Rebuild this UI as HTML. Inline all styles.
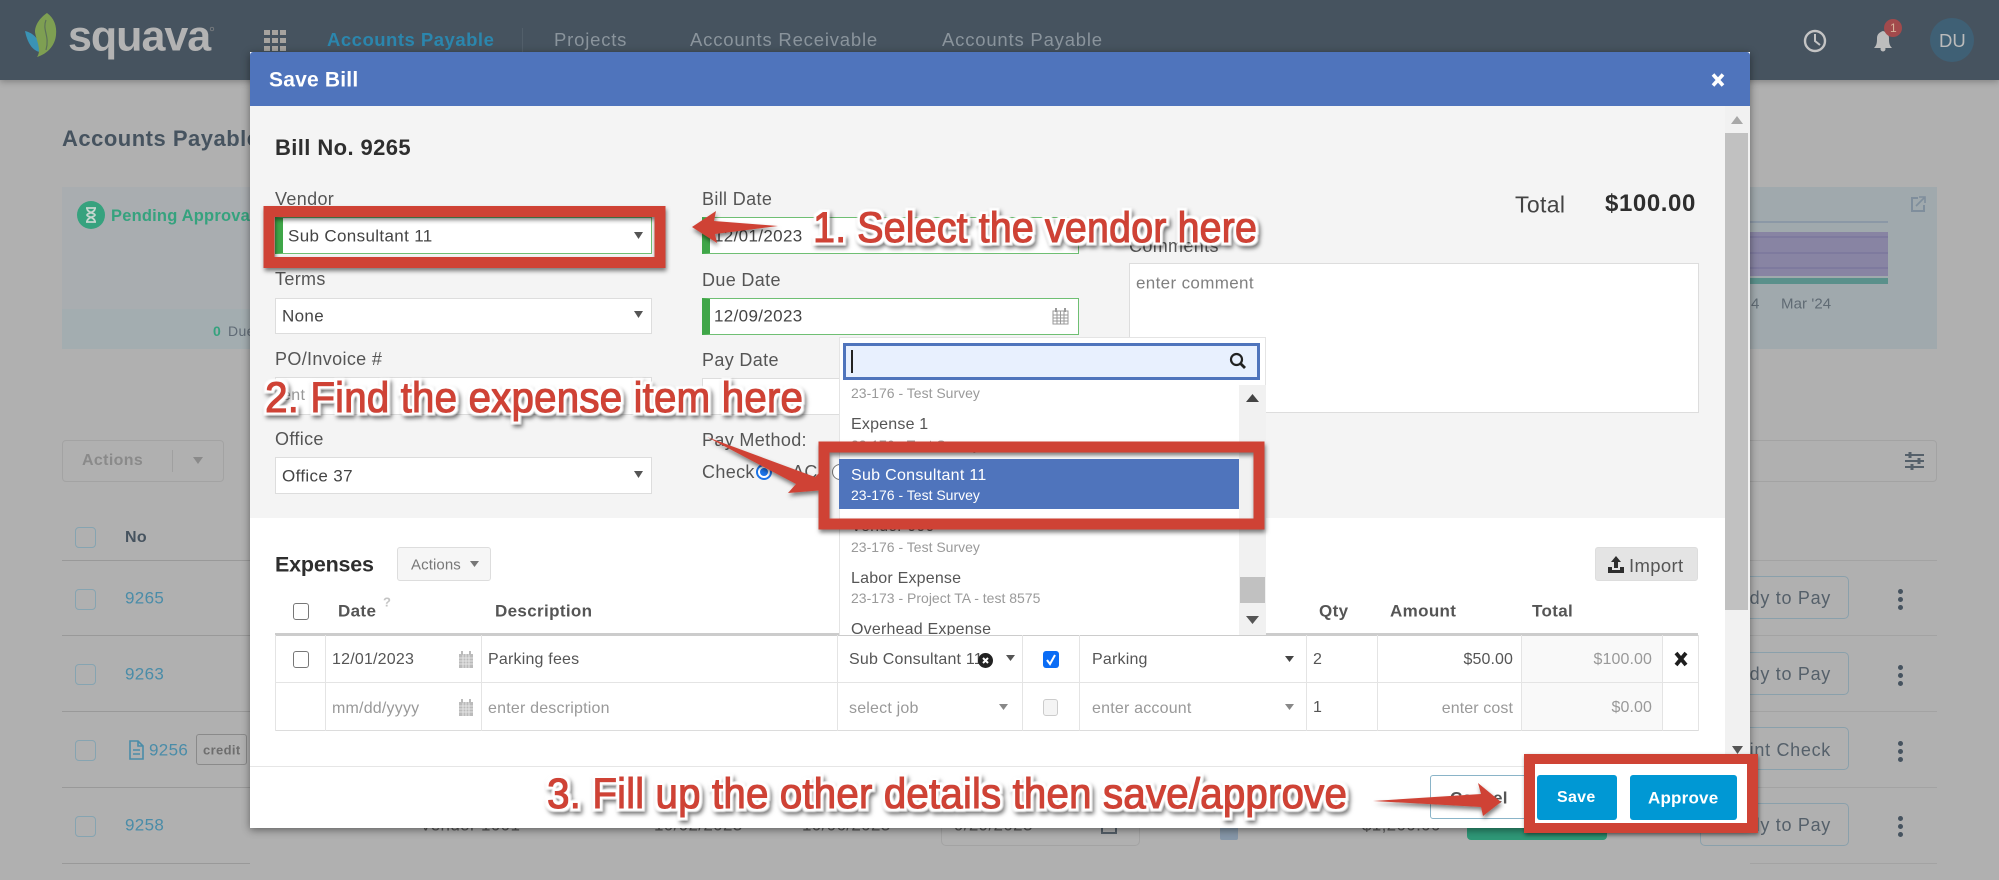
<!DOCTYPE html>
<html><head><meta charset="utf-8"><title>Save Bill</title>
<style>
html,body{margin:0;padding:0;background:#b0b0b0}
#p{position:relative;width:1999px;height:880px;overflow:hidden;background:#b0b0b0;font-family:"Liberation Sans",sans-serif;font-size:17px;color:#444}
#p div,#p span.t{position:absolute;box-sizing:border-box}
.t{white-space:nowrap;line-height:1;transform:translateY(-50%);letter-spacing:.35px}
.b{font-weight:bold}
.inp{background:#fff;border:1px solid #ddd}
.g{background:#fff;border:1px solid #6fbf73;border-left:8px solid #3fa648}
.hl{background:#999;height:1px;left:62px;width:188px}
.hr{background:#a3a3a3;height:1px;left:1750px;width:187px}
.pb{left:1700px;width:149px;height:43px;border:1.5px solid #8aa0ab;border-radius:5px}
.pt{right:168px;font-size:18px;letter-spacing:.7px;color:#55606a}
.cb{width:16px;height:20px;border:1.5px solid #777;border-radius:3px;background:#fff}
.ncb{width:21px;height:21px;border:1.5px solid #86a4b1;border-radius:4px}
.dot{left:1898px;width:5px;height:5px;border-radius:50%;background:#46535f}
.vl{top:635px;height:96px;width:1px;background:#e4e4e4}
.lab{color:#555;font-size:18px}
.gr{color:#9a9a9a;font-size:14px;letter-spacing:0}
.ph{color:#999;font-size:16px}
.nv{font-size:18.5px;letter-spacing:.8px;color:#8a949c}
.th{font-size:17px;color:#555}
</style></head><body><div id="p">

<!-- nav -->
<div style="left:0;top:0;width:1999px;height:80px;background:#46535f;box-shadow:0 2px 6px rgba(0,0,0,.25)"></div>
<svg style="position:absolute;left:0;top:0" width="1999" height="80">
<path d="M25 31C33 33 39 38 43 52C35 53 28 46 25 31Z" fill="#3a93b5"/>
<path d="M47 13C54 18 57 26 56 35C55 46 47 54 37 57C42 50 36 40 35 32C35 24 41 17 47 13Z" fill="#7e9f52"/>
<path d="M46 20C42 30 50 36 46 50" stroke="#46535f" stroke-width="1.2" fill="none" opacity=".6"/>
<circle cx="212" cy="29" r="1.8" fill="none" stroke="#8a8a8a" stroke-width=".7"/>
<g fill="#a6a39f"><rect x="264" y="30" width="6" height="5"/><rect x="272" y="30" width="6" height="5"/><rect x="280" y="30" width="6" height="5"/><rect x="264" y="38" width="6" height="5"/><rect x="272" y="38" width="6" height="5"/><rect x="280" y="38" width="6" height="5"/><rect x="264" y="46" width="6" height="5"/><rect x="272" y="46" width="6" height="5"/><rect x="280" y="46" width="6" height="5"/></g>
<rect x="522" y="28" width="1" height="24" fill="#525f6a"/>
<circle cx="1815" cy="41" r="10" fill="none" stroke="#c4c4c4" stroke-width="2.4"/>
<path d="M1815 34V41L1820 45" fill="none" stroke="#c4c4c4" stroke-width="2"/>
<path d="M1874 48C1877 45 1877 42 1877 38C1877 34 1880 32 1883 31C1886 32 1889 34 1889 38C1889 42 1889 45 1892 48Z" fill="#bdbdbd"/><circle cx="1883" cy="49" r="2.5" fill="#bdbdbd"/>
<circle cx="1893" cy="28" r="9" fill="#a24a4c"/>
<circle cx="1952" cy="40" r="22" fill="#3f6075"/>
</svg>
<span class="t b" style="left:68px;top:37px;font-size:43px;color:#b3b3b3;letter-spacing:-1px">squava</span>
<span class="t b nv" style="left:327px;top:40px;color:#2b86ad;letter-spacing:.5px">Accounts Payable</span>
<span class="t nv" style="left:554px;top:40px">Projects</span>
<span class="t nv" style="left:690px;top:40px">Accounts Receivable</span>
<span class="t nv" style="left:942px;top:40px">Accounts Payable</span>
<span class="t" style="left:1890px;top:28px;font-size:12px;color:#d8b49a">1</span>
<span class="t" style="left:1939px;top:41px;font-size:18.5px;color:#bbb;letter-spacing:0">DU</span>

<!-- background page -->
<span class="t b" style="left:62px;top:139px;font-size:22px;color:#46535f;letter-spacing:.5px">Accounts Payable</span>
<div style="left:62px;top:187px;width:188px;height:162px;background:#a9adb0"></div>
<div style="left:62px;top:309px;width:188px;height:40px;background:#a3adb0"></div>
<svg style="position:absolute;left:77px;top:201px" width="28" height="28"><circle cx="14" cy="14" r="14" fill="#36a27e"/><path d="M9 7H19M9 21H19M10 7C10 12 18 12 18 14C18 16 10 16 10 21M18 7C18 12 10 12 10 14C10 16 18 16 18 21" stroke="#c5d6cf" stroke-width="1.8" fill="none"/></svg>
<span class="t b" style="left:111px;top:216px;font-size:16.5px;color:#36a27e;width:139px;overflow:hidden;letter-spacing:.2px;padding:3px 0">Pending Approval</span>
<span class="t b" style="left:213px;top:331px;font-size:14px;color:#36a27e">0</span>
<span class="t" style="left:228px;top:331px;font-size:14px;color:#5f6a75">Due</span>
<div style="left:1750px;top:187px;width:187px;height:162px;background:#a0a9ad"></div>
<div style="left:1750px;top:221px;width:138px;height:2px;background:#8b98a6"></div>
<div style="left:1750px;top:232px;width:138px;height:44px;background:#8884a3"></div>
<div style="left:1750px;top:236px;width:138px;height:2px;background:#7e7a9e"></div>
<div style="left:1750px;top:252px;width:138px;height:2px;background:#7e7a9e"></div>
<div style="left:1750px;top:267px;width:138px;height:2px;background:#7e7a9e"></div>
<div style="left:1750px;top:278px;width:138px;height:6px;background:#5a908b"></div>
<span class="t" style="left:1751px;top:304px;font-size:15px;color:#606b74;letter-spacing:.1px">4</span>
<span class="t" style="left:1781px;top:304px;font-size:15px;color:#606b74;letter-spacing:.1px">Mar '24</span>
<svg style="position:absolute;left:1909px;top:195px" width="18" height="18"><path d="M9 3H3V16H15V10" fill="none" stroke="#7f8e9c" stroke-width="2"/><path d="M7 11L15 3M10 2H16V8" fill="none" stroke="#7f8e9c" stroke-width="1.6"/></svg>

<div style="left:62px;top:440px;width:162px;height:42px;border:1.5px solid #a3a3a3;border-radius:4px"></div>
<span class="t b" style="left:82px;top:461px;font-size:16px;color:#8a8a8a">Actions</span>
<div style="left:172px;top:450px;width:1px;height:22px;background:#a0a0a0"></div>
<svg style="position:absolute;left:192px;top:457px" width="12" height="8"><path d="M1 0H11L6 7Z" fill="#8a8a8a"/></svg>
<div style="left:1750px;top:440px;width:187px;height:42px;border:1.5px solid #a3a3a3;border-left:0;border-radius:0 4px 4px 0"></div>
<svg style="position:absolute;left:1904px;top:450px" width="22" height="22"><path d="M1 5H20M1 11H20M1 17H20" stroke="#55606a" stroke-width="2"/><path d="M6 2V8M15 8V14M8 14V20" stroke="#55606a" stroke-width="3"/></svg>

<div class="ncb" style="left:75px;top:527px"></div>
<span class="t b" style="left:125px;top:538px;font-size:16px;color:#46535f">No</span>
<div class="hl" style="top:560px"></div><div class="hr" style="top:560px"></div>
<div class="ncb" style="left:75px;top:589px"></div>
<span class="t" style="left:125px;top:598px;color:#4a8ca8">9265</span>
<div class="hl" style="top:635px"></div><div class="hr" style="top:635px"></div>
<div class="ncb" style="left:75px;top:664px"></div>
<span class="t" style="left:125px;top:674px;color:#4a8ca8">9263</span>
<div class="hl" style="top:711px"></div><div class="hr" style="top:711px"></div>
<div class="ncb" style="left:75px;top:740px"></div>
<svg style="position:absolute;left:128px;top:740px" width="16" height="20"><path d="M2 1H10L15 6V19H2ZM10 1V6H15M5 10H12M5 14H12" fill="none" stroke="#4a8ca8" stroke-width="1.6"/></svg>
<span class="t" style="left:149px;top:750px;color:#4a8ca8">9256</span>
<div style="left:196px;top:734px;width:51px;height:31px;border:1px solid #8a8a8a;border-radius:3px"></div>
<span class="t b" style="left:203px;top:750px;font-size:13px;color:#6e6e6e">credit</span>
<div class="hl" style="top:787px"></div><div class="hr" style="top:787px"></div>
<div class="ncb" style="left:75px;top:816px"></div>
<span class="t" style="left:125px;top:825px;color:#4a8ca8">9258</span>
<div class="hl" style="top:863px"></div><div class="hr" style="top:863px"></div>

<div class="pb" style="top:576px"></div><span class="t pt" style="top:598px">Ready to Pay</span>
<div class="pb" style="top:652px"></div><span class="t pt" style="top:674px">Ready to Pay</span>
<div class="pb" style="top:727px"></div><span class="t pt" style="top:750px">Print Check</span>
<div class="pb" style="top:803px"></div><span class="t pt" style="top:825px">Ready to Pay</span>
<div class="dot" style="top:589px"></div><div class="dot" style="top:597px"></div><div class="dot" style="top:605px"></div>
<div class="dot" style="top:665px"></div><div class="dot" style="top:673px"></div><div class="dot" style="top:681px"></div>
<div class="dot" style="top:741px"></div><div class="dot" style="top:749px"></div><div class="dot" style="top:757px"></div>
<div class="dot" style="top:816px"></div><div class="dot" style="top:824px"></div><div class="dot" style="top:832px"></div>

<span class="t" style="left:420px;top:825px;color:#555">Vendor 1001</span>
<span class="t" style="left:654px;top:825px;color:#555">10/02/2023</span>
<span class="t" style="left:802px;top:825px;color:#555">10/06/2023</span>
<div style="left:941px;top:800px;width:199px;height:46px;border:1.5px solid #a3a3a3;border-radius:5px"></div>
<span class="t" style="left:954px;top:825px;color:#555">9/29/2023</span>
<div style="left:1101px;top:820px;width:16px;height:14px;border:2px solid #55606a"></div>
<div style="left:1220px;top:820px;width:18px;height:20px;background:#8697a8;border-radius:2px"></div>
<span class="t" style="left:1362px;top:825px;color:#555">$1,200.00</span>
<div style="left:1467px;top:815px;width:140px;height:25px;background:#2f9877;border-radius:4px"></div>

<!-- modal -->
<div style="left:250px;top:52px;width:1500px;height:776px;background:#fff;box-shadow:0 2px 8px rgba(0,0,0,.45)"></div>
<div style="left:250px;top:52px;width:1500px;height:54px;background:#4f74bc;border-radius:3px 3px 0 0"></div>
<span class="t b" style="left:269px;top:80px;font-size:21px;color:#fff;letter-spacing:.2px">Save Bill</span>
<svg style="position:absolute;left:1711px;top:72px" width="14" height="16"><path d="M2 2.500L12 13.500M12 2.500L2 13.500" stroke="#fff" stroke-width="3.600"/></svg>
<div style="left:250px;top:106px;width:1475px;height:412px;background:#f4f4f4"></div>
<div style="left:250px;top:766px;width:1500px;height:1px;background:#e6e6e6"></div>
<div style="left:1725px;top:106px;width:25px;height:660px;background:#f1f1f1"></div>
<div style="left:1725px;top:133px;width:23px;height:477px;background:#c1c1c1"></div>
<svg style="position:absolute;left:1731px;top:116px" width="12" height="8"><path d="M6 0L12 8H0Z" fill="#a8a8a8"/></svg>
<svg style="position:absolute;left:1732px;top:746px" width="11" height="8"><path d="M0 0H11L5.500 8Z" fill="#555"/></svg>

<span class="t b" style="left:275px;top:148px;font-size:22px;color:#2e2e2e;letter-spacing:.4px">Bill No. 9265</span>
<span class="t lab" style="left:275px;top:199px">Vendor</span>
<span class="t lab" style="left:702px;top:199px">Bill Date</span>
<span class="t" style="left:1515px;top:205px;font-size:23px;color:#444">Total</span>
<span class="t b" style="left:1605px;top:204px;font-size:24px;color:#2e2e2e;letter-spacing:.6px">$100.00</span>
<span class="t lab" style="left:1129px;top:246px">Comments</span>
<div class="inp" style="left:1129px;top:263px;width:570px;height:150px"></div>
<span class="t ph" style="left:1136px;top:283px;font-size:17px;color:#808080">enter comment</span>

<div class="g" style="left:275px;top:217px;width:377px;height:37px"></div>
<span class="t" style="left:288px;top:236px;color:#444">Sub Consultant 11</span>
<svg style="position:absolute;left:634px;top:232px" width="9" height="7"><path d="M0 0H9L4.500 7Z" fill="#555"/></svg>
<div class="g" style="left:702px;top:217px;width:377px;height:37px"></div>
<span class="t" style="left:714px;top:236px;color:#444">12/01/2023</span>

<span class="t lab" style="left:275px;top:279px">Terms</span>
<div class="inp" style="left:275px;top:298px;width:377px;height:36px"></div>
<span class="t" style="left:282px;top:316px;color:#444">None</span>
<svg style="position:absolute;left:634px;top:311px" width="9" height="7"><path d="M0 0H9L4.500 7Z" fill="#555"/></svg>
<span class="t lab" style="left:702px;top:280px">Due Date</span>
<div class="g" style="left:702px;top:298px;width:377px;height:37px"></div>
<span class="t" style="left:714px;top:316px;color:#444">12/09/2023</span>
<svg style="position:absolute;left:1052px;top:307px" width="17" height="18"><path d="M1 4H16V17H1ZM1 8H16M1 11H16M1 14H16M5 4V17M8.500 4V17M12 4V17" fill="none" stroke="#999" stroke-width="1"/><path d="M4 1V5M13 1V5" stroke="#999" stroke-width="2"/></svg>

<span class="t lab" style="left:275px;top:359px">PO/Invoice #</span>
<div class="inp" style="left:275px;top:377px;width:377px;height:38px"></div>
<span class="t ph" style="left:282px;top:396px">ent</span>
<span class="t lab" style="left:702px;top:360px">Pay Date</span>
<div class="inp" style="left:702px;top:378px;width:377px;height:37px"></div>
<span class="t lab" style="left:275px;top:439px">Office</span>
<div class="inp" style="left:275px;top:457px;width:377px;height:37px"></div>
<span class="t" style="left:282px;top:476px;color:#444">Office 37</span>
<svg style="position:absolute;left:634px;top:471px" width="9" height="7"><path d="M0 0H9L4.500 7Z" fill="#555"/></svg>
<span class="t lab" style="left:702px;top:440px">Pay Method:</span>
<span class="t lab" style="left:702px;top:472px">Check</span>
<div style="left:756px;top:464px;width:16px;height:16px;border-radius:50%;background:#fff;border:2px solid #1a73e8"></div>
<div style="left:760px;top:468px;width:8px;height:8px;border-radius:50%;background:#1a73e8"></div>
<span class="t lab" style="left:792px;top:472px">ACH</span>
<div style="left:832px;top:464px;width:16px;height:16px;border-radius:50%;background:#fff;border:1px solid #777"></div>

<span class="t b" style="left:275px;top:565px;font-size:21.5px;color:#2e2e2e;letter-spacing:-.2px">Expenses</span>
<div style="left:397px;top:547px;width:94px;height:34px;background:#f6f6f6;border:1px solid #ddd;border-radius:3px"></div>
<span class="t" style="left:411px;top:565px;font-size:15px;color:#777;letter-spacing:.1px">Actions</span>
<svg style="position:absolute;left:470px;top:561px" width="9" height="6"><path d="M0 0H9L4.500 6Z" fill="#777"/></svg>
<div style="left:1595px;top:547px;width:103px;height:34px;background:#e4e4e4;border-radius:3px;border:1px solid #ddd"></div>
<svg style="position:absolute;left:1607px;top:556px" width="18" height="18"><path d="M9 0L14 6H11V12H7V6H4ZM1 11H5V14H13V11H17V17H1Z" fill="#2e2e2e"/></svg>
<span class="t" style="left:1629px;top:566px;font-size:18.5px;color:#555">Import</span>

<!-- table -->
<div class="cb" style="left:293px;top:603px;height:17px;border-radius:3px"></div>
<span class="t b th" style="left:338px;top:611px">Date</span>
<span class="t b" style="left:383px;top:602px;font-size:13px;color:#c4c4c4">?</span>
<span class="t b th" style="left:495px;top:611px">Description</span>
<span class="t b th" style="left:1319px;top:611px">Qty</span>
<span class="t b th" style="left:1390px;top:611px">Amount</span>
<span class="t b th" style="left:1532px;top:611px">Total</span>
<div style="left:275px;top:633px;width:1423px;height:3px;background:#ccc"></div>
<div style="left:1521px;top:636px;width:141px;height:94px;background:#f9f9f9"></div>
<div style="left:275px;top:682px;width:1423px;height:1px;background:#e4e4e4"></div>
<div style="left:275px;top:730px;width:1423px;height:1px;background:#dcdcdc"></div>
<div class="vl" style="left:275px"></div><div class="vl" style="left:325px"></div><div class="vl" style="left:481px"></div><div class="vl" style="left:837px"></div><div class="vl" style="left:1022px"></div><div class="vl" style="left:1079px"></div><div class="vl" style="left:1306px"></div><div class="vl" style="left:1377px"></div><div class="vl" style="left:1521px"></div><div class="vl" style="left:1662px"></div><div class="vl" style="left:1698px"></div>
<div class="cb" style="left:293px;top:651px;height:17px"></div>
<span class="t" style="left:332px;top:660px;font-size:16px;color:#555;letter-spacing:.2px">12/01/2023</span>
<svg style="position:absolute;left:459px;top:651px" width="14" height="17"><path d="M0 3H14V17H0Z" fill="#bbb"/><path d="M0 7H14M0 10H14M0 13H14M4 3V17M7 3V17M10 3V17" stroke="#eee" stroke-width=".8"/><path d="M3 0V4M11 0V4" stroke="#bbb" stroke-width="2"/></svg>
<span class="t" style="left:488px;top:660px;font-size:16px;color:#555;letter-spacing:.2px">Parking fees</span>
<span class="t" style="left:849px;top:660px;font-size:16px;color:#555;letter-spacing:.2px">Sub Consultant 11</span>
<svg style="position:absolute;left:978px;top:653px" width="15" height="15"><circle cx="7.500" cy="7.500" r="7.500" fill="#222"/><path d="M5 5L10 10M10 5L5 10" stroke="#fff" stroke-width="2"/></svg>
<svg style="position:absolute;left:1006px;top:655px" width="9" height="6"><path d="M0 0H9L4.500 6Z" fill="#555"/></svg>
<div style="left:1043px;top:651px;width:16px;height:17px;background:#0a6cf5;border-radius:3px"></div>
<svg style="position:absolute;left:1043px;top:651px" width="16" height="17"><path d="M4 9L7 13L12 4" stroke="#fff" stroke-width="2" fill="none"/></svg>
<span class="t" style="left:1092px;top:660px;font-size:16px;color:#555;letter-spacing:.2px">Parking</span>
<svg style="position:absolute;left:1285px;top:656px" width="9" height="6"><path d="M0 0H9L4.500 6Z" fill="#444"/></svg>
<span class="t" style="left:1313px;top:660px;font-size:16px;color:#555">2</span>
<span class="t" style="right:486px;top:660px;font-size:16px;color:#555;letter-spacing:.1px">$50.00</span>
<span class="t" style="right:347px;top:660px;font-size:16px;color:#999;letter-spacing:.1px">$100.00</span>
<svg style="position:absolute;left:1674px;top:651px" width="14" height="16"><path d="M2 2L12 14M12 2L2 14" stroke="#1e1e1e" stroke-width="3.800"/></svg>

<span class="t ph" style="left:332px;top:709px;letter-spacing:.2px">mm/dd/yyyy</span>
<svg style="position:absolute;left:459px;top:699px" width="14" height="17"><path d="M0 3H14V17H0Z" fill="#bbb"/><path d="M0 7H14M0 10H14M0 13H14M4 3V17M7 3V17M10 3V17" stroke="#eee" stroke-width=".8"/><path d="M3 0V4M11 0V4" stroke="#bbb" stroke-width="2"/></svg>
<span class="t ph" style="left:488px;top:709px;letter-spacing:.2px">enter description</span>
<span class="t ph" style="left:849px;top:709px;letter-spacing:.2px">select job</span>
<svg style="position:absolute;left:999px;top:704px" width="9" height="6"><path d="M0 0H9L4.500 6Z" fill="#888"/></svg>
<div style="left:1043px;top:699px;width:15px;height:17px;background:#f4f4f4;border:1px solid #ccc;border-radius:3px"></div>
<span class="t ph" style="left:1092px;top:709px;letter-spacing:.2px">enter account</span>
<svg style="position:absolute;left:1285px;top:704px" width="9" height="6"><path d="M0 0H9L4.500 6Z" fill="#888"/></svg>
<span class="t" style="left:1313px;top:708px;font-size:16px;color:#555">1</span>
<span class="t ph" style="right:486px;top:709px;letter-spacing:.1px">enter cost</span>
<span class="t" style="right:347px;top:708px;font-size:16px;color:#999;letter-spacing:.1px">$0.00</span>

<!-- footer -->
<div style="left:1430px;top:775px;width:110px;height:44px;background:#fff;border:1.5px solid #8ab4c8;border-radius:3px"></div>
<span class="t b" style="left:1450px;top:798px;font-size:17px;color:#555">Cancel</span>
<div style="left:1524px;top:754px;width:234px;height:79px;background:#fff;border:solid #cf4335;border-width:10px 11px 10px 11px;box-shadow:1px 2px 4px rgba(0,0,0,.45)"></div>
<div style="left:1537px;top:775px;width:80px;height:45px;background:#0098d4;border-radius:3px"></div>
<div style="left:1630px;top:775px;width:107px;height:45px;background:#0098d4;border-radius:3px"></div>
<span class="t b" style="left:1557px;top:798px;font-size:16px;color:#fff;letter-spacing:.3px">Save</span>
<span class="t b" style="left:1648px;top:798px;font-size:17px;color:#fff;letter-spacing:.2px">Approve</span>

<!-- dropdown -->
<div style="left:839px;top:337px;width:427px;height:298px;background:#fff;border:1px solid #e4e4e4;border-bottom:0"></div>
<div style="left:843px;top:343px;width:417px;height:37px;background:#e8f0fe;border:3px solid #4f74bc"></div>
<div style="left:851px;top:350px;width:1.500px;height:23px;background:#222"></div>
<svg style="position:absolute;left:1229px;top:352px" width="18" height="18"><circle cx="7.500" cy="7.500" r="5.500" fill="none" stroke="#222" stroke-width="2.200"/><path d="M11.500 11.500L16 16" stroke="#222" stroke-width="2.800"/></svg>
<div style="left:1239px;top:385px;width:27px;height:250px;background:#f1f1f1"></div>
<div style="left:1240px;top:577px;width:25px;height:26px;background:#c1c1c1"></div>
<svg style="position:absolute;left:1246px;top:394px" width="13" height="8"><path d="M6.500 0L13 8H0Z" fill="#444"/></svg>
<svg style="position:absolute;left:1246px;top:616px" width="13" height="8"><path d="M0 0H13L6.500 8Z" fill="#555"/></svg>
<span class="t gr" style="left:851px;top:393px">23-176 - Test Survey</span>
<span class="t" style="left:851px;top:425px;font-size:16px;color:#555;letter-spacing:.2px">Expense 1</span>
<span class="t gr" style="left:851px;top:445px">23-176 - Test Survey</span>
<div style="left:839px;top:459px;width:400px;height:50px;background:#4f74bc"></div>
<span class="t" style="left:851px;top:476px;font-size:16px;color:#fff;letter-spacing:.3px">Sub Consultant 11</span>
<span class="t" style="left:851px;top:495px;font-size:14px;color:#fff;letter-spacing:0">23-176 - Test Survey</span>
<span class="t" style="left:851px;top:527px;font-size:16px;color:#555;letter-spacing:.2px">Vendor 999</span>
<span class="t gr" style="left:851px;top:547px">23-176 - Test Survey</span>
<span class="t" style="left:851px;top:579px;font-size:16px;color:#555;letter-spacing:.2px">Labor Expense</span>
<span class="t gr" style="left:851px;top:598px">23-173 - Project TA - test 8575</span>
<div style="left:840px;top:622px;width:399px;height:13px;overflow:hidden"><span class="t" style="position:absolute;left:11px;top:8px;font-size:16px;color:#555;letter-spacing:.2px">Overhead Expense</span></div>

<!-- annotations -->
<svg style="position:absolute;left:0;top:0" width="1999" height="880">
<defs>
<filter id="s" x="-10%" y="-30%" width="120%" height="170%"><feDropShadow dx="1" dy="3" stdDeviation="2" flood-color="#000" flood-opacity=".5"/></filter>
<filter id="tx" x="-5%" y="-40%" width="110%" height="190%">
<feMorphology in="SourceGraphic" operator="dilate" radius=".5" result="r"/>
<feMorphology in="SourceAlpha" operator="dilate" radius="3" result="w0"/>
<feGaussianBlur in="w0" stdDeviation=".6" result="w1"/>
<feFlood flood-color="#fff"/><feComposite in2="w1" operator="in" result="w"/>
<feGaussianBlur in="w0" stdDeviation="2" result="b"/><feOffset in="b" dx="2" dy="3" result="o"/>
<feFlood flood-color="#000" flood-opacity=".55"/><feComposite in2="o" operator="in" result="sh"/>
<feMerge><feMergeNode in="sh"/><feMergeNode in="w"/><feMergeNode in="r"/></feMerge>
</filter>
</defs>
<g filter="url(#s)">
<rect x="269" y="211.500" width="391" height="51" fill="none" stroke="#cf4335" stroke-width="11"/>
<rect x="824" y="447" width="435" height="77" fill="none" stroke="#cf4335" stroke-width="11"/>
<path d="M692 227L716 211L714 221L778 226L715 234L717 243Z" fill="#cf4335"/>
<path d="M707 437L815 477L822 470L825 490L788 493L796 484Z" fill="#cf4335"/>
<path d="M1373 801L1481 794L1478 783L1501 802L1483 816L1481 807Z" fill="#cf4335"/>
</g>
<g font-family="'Liberation Sans',sans-serif" font-size="43" fill="#cf4335" filter="url(#tx)">
<text x="813" y="242" textLength="444" lengthAdjust="spacingAndGlyphs">1. Select the vendor here</text>
<text x="265" y="412" textLength="538" lengthAdjust="spacingAndGlyphs">2. Find the expense item here</text>
<text x="547" y="808" textLength="800" lengthAdjust="spacingAndGlyphs">3. Fill up the other details then save/approve</text>
</g>
</svg>
</div></body></html>
